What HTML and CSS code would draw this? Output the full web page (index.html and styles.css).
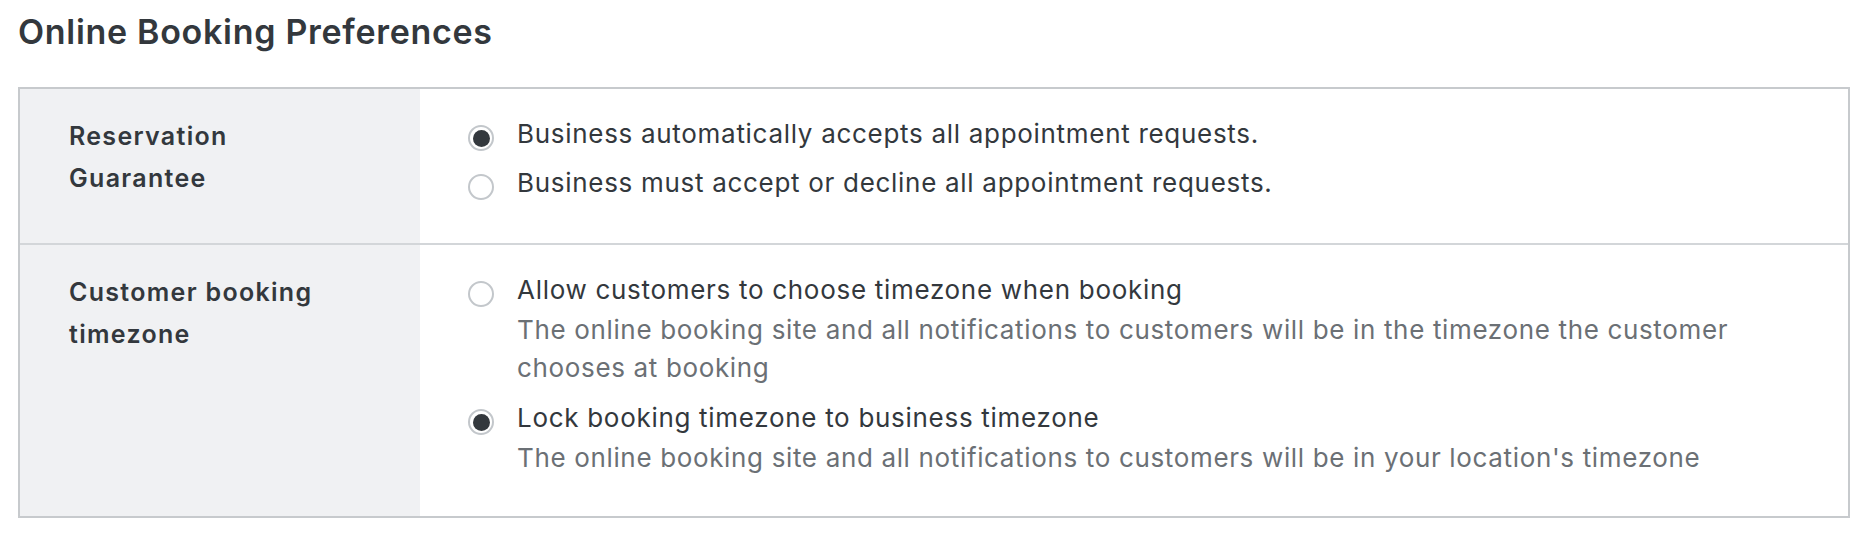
FILE: index.html
```html
<!DOCTYPE html>
<html lang="en">
<head>
<meta charset="utf-8">
<title>Online Booking Preferences</title>
<link rel="stylesheet" href="styles.css">
</head>
<body>
<div class="page">
  <h1 class="title">Online Booking Preferences</h1>
  <div class="table">
    <div class="row">
      <div class="label">Reservation<br>Guarantee</div>
      <div class="options">
        <div class="option">
          <span class="radio checked"></span>
          <div class="option-text">
            <div class="option-title">Business automatically accepts all appointment requests.</div>
          </div>
        </div>
        <div class="option">
          <span class="radio"></span>
          <div class="option-text">
            <div class="option-title">Business must accept or decline all appointment requests.</div>
          </div>
        </div>
      </div>
    </div>
    <div class="row">
      <div class="label">Customer booking<br>timezone</div>
      <div class="options with-desc">
        <div class="option">
          <span class="radio"></span>
          <div class="option-text">
            <div class="option-title">Allow customers to choose timezone when booking</div>
            <div class="option-desc">The online booking site and all notifications to customers will be in the timezone the customer chooses at booking</div>
          </div>
        </div>
        <div class="option">
          <span class="radio checked"></span>
          <div class="option-text">
            <div class="option-title">Lock booking timezone to business timezone</div>
            <div class="option-desc">The online booking site and all notifications to customers will be in your location's timezone</div>
          </div>
        </div>
      </div>
    </div>
  </div>
</div>
</body>
</html>
```
FILE: styles.css
```css
* { box-sizing: border-box; }
html, body { margin: 0; padding: 0; background: #ffffff; }
body {
  font-family: Inter, "Liberation Sans", sans-serif;
  color: #33383d;
}
.page { padding: 12px 18px 0 18px; }
.title {
  margin: 0 0 35px 0;
  font-size: 34px;
  line-height: 40px;
  font-weight: 600;
  letter-spacing: 0.7px;
  color: #33383d;
}
.table {
  border: 2px solid #c7cacd;
}
.row {
  display: grid;
  grid-template-columns: 400px 1fr;
}
.row + .row { border-top: 2px solid #d3d6d9; }
.label {
  background: #f0f1f3;
  padding: 27px 20px 30px 49px;
  font-size: 25px;
  line-height: 41.5px;
  font-weight: 600;
  letter-spacing: 1.3px;
  color: #33383d;
}
.options {
  padding: 27px 40px 42px 48px;
  display: flex;
  flex-direction: column;
  gap: 13px;
}
.options.with-desc { padding-bottom: 39px; }
.option {
  display: flex;
  align-items: flex-start;
  gap: 23px;
}
.radio {
  flex: none;
  width: 26px;
  height: 26px;
  margin-top: 9px;
  border: 2px solid #c3c7cb;
  border-radius: 50%;
  display: flex;
  align-items: center;
  justify-content: center;
  background: #fff;
}
.radio.checked::after {
  content: "";
  width: 17px;
  height: 17px;
  border-radius: 50%;
  background: #33383d;
}
.option-title {
  font-size: 26px;
  line-height: 36px;
  letter-spacing: 0.7px;
  color: #33383d;
}
.option-desc {
  margin-top: 3px;
  font-size: 26px;
  line-height: 38px;
  letter-spacing: 0.65px;
  color: #6b7075;
}
```
